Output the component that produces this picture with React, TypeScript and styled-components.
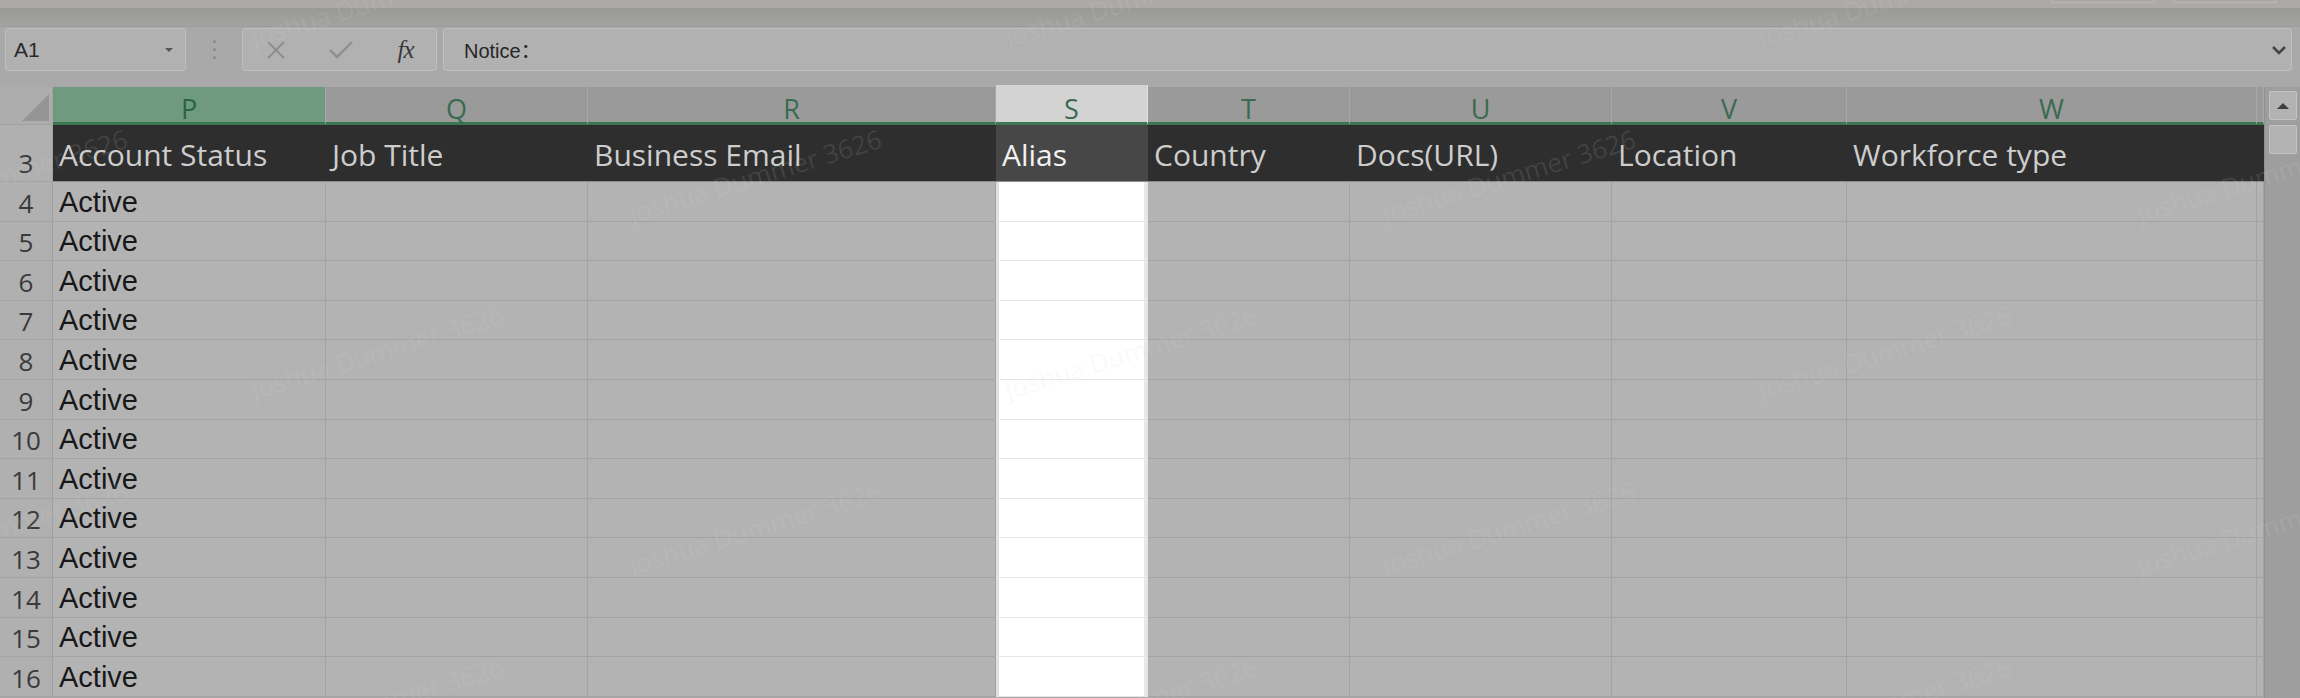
import React from 'react';
import styled, { createGlobalStyle } from 'styled-components';

const GlobalStyle = createGlobalStyle`
  html, body {
    margin: 0;
    padding: 0;
    overflow: hidden;
    background: #a9a9a9;
  }
  body {
    font-family: "Open Sans", "Liberation Sans", sans-serif;
  }
`;

type Column = { key: string; width: number; label: string; spot?: boolean; active?: boolean };

const columns: Column[] = [
    { key: 'P', width: 273, label: 'Account Status', active: true },
    { key: 'Q', width: 262, label: 'Job Title' },
    { key: 'R', width: 408, label: 'Business Email' },
    { key: 'S', width: 152, label: 'Alias', spot: true },
    { key: 'T', width: 202, label: 'Country' },
    { key: 'U', width: 262, label: 'Docs(URL)' },
    { key: 'V', width: 235, label: 'Location' },
    { key: 'W', width: 410, label: 'Workforce type' },
    { key: '', width: 7, label: '' },
];

const bodyRows = [4, 5, 6, 7, 8, 9, 10, 11, 12, 13, 14, 15, 16];

const Page = styled.div`
    position: relative;
    width: 2300px;
    height: 698px;
    display: flex;
    flex-direction: column;
    overflow: hidden;
    background: #a9a9a9;
`;

const TopStrip = styled.div`
    height: 8px;
    background: #abaaa7;
    display: flex;
    justify-content: flex-end;
    gap: 18px;
    padding-right: 23px;
`;

const RibbonButtonEdge = styled.div`
    width: 102px;
    height: 2px;
    border: 1px solid #b8b8b5;
    border-top: none;
    border-radius: 0 0 3px 3px;
`;

const TabBand = styled.div`
    height: 18px;
    background: linear-gradient(#9a9997, #a2a2a0);
    border-bottom: 1px solid #9d9d9b;
`;

const FormulaBar = styled.div`
    height: 60px;
    box-sizing: border-box;
    padding: 1px 8px 0 5px;
    display: flex;
    align-items: flex-start;
`;

const FieldBox = styled.div`
    height: 43px;
    box-sizing: border-box;
    background: #b1b1b1;
    border: 1px solid #bfbfbf;
    border-radius: 3px;
    display: flex;
    align-items: center;
`;

const NameBox = styled(FieldBox)`
    width: 181px;
    justify-content: space-between;
    padding: 0 12px 0 8px;
    font-family: "Liberation Sans", Arial, sans-serif;
    font-size: 21px;
    color: #2a2a2a;
`;

const DropCaret = styled.span`
    width: 0;
    height: 0;
    border-left: 4px solid transparent;
    border-right: 4px solid transparent;
    border-top: 4px solid #555;
`;

const Grip = styled.div`
    width: 56px;
    height: 43px;
    display: flex;
    flex-direction: column;
    align-items: center;
    justify-content: center;
    gap: 5px;
`;

const GripDot = styled.span`
    width: 3px;
    height: 3px;
    border-radius: 50%;
    background: #8b8b8b;
`;

const FxBox = styled(FieldBox)`
    width: 195px;
    display: grid;
    grid-template-columns: repeat(3, 65px);
    justify-items: center;
`;

const FxGlyph = styled.span`
    font-family: "Liberation Serif", "Times New Roman", serif;
    font-style: italic;
    font-size: 25px;
    color: #3a3a3a;
    letter-spacing: -1px;
`;

const FormulaInput = styled(FieldBox)`
    flex: 1;
    margin-left: 6px;
    padding: 0 4px 0 20px;
    justify-content: space-between;
    font-family: "Liberation Sans", "Noto Sans CJK SC", sans-serif;
    font-size: 20px;
    color: #262626;
`;

const SheetArea = styled.div`
    flex: 1;
    display: flex;
`;

const Grid = styled.div`
    display: grid;
    grid-template-columns: 53px ${columns.map((c) => `${c.width}px`).join(' ')};
    grid-template-rows: 38px 57px repeat(13, 39.6px);
    align-content: start;
`;

const CornerCell = styled.div`
    background: #adadad;
    border-right: 1px solid #a3a3a3;
    border-bottom: 1px solid #a0a0a0;
    display: flex;
    justify-content: flex-end;
    align-items: flex-end;
    padding: 0 3px 3px 0;
`;

const CornerTriangle = styled.div`
    width: 27px;
    height: 27px;
    background: #959595;
    clip-path: polygon(100% 0, 100% 100%, 0 100%);
`;

const ColumnHead = styled.div<{ $spot?: boolean; $active?: boolean }>`
    box-sizing: border-box;
    background: ${(p) => (p.$spot ? '#d3d3d3' : p.$active ? '#6f9a80' : '#9a9a9a')};
    border-right: 1px solid ${(p) => (p.$spot ? '#e2e2e2' : '#a8a8a8')};
    border-bottom: 3px solid #3b7751;
    margin-top: ${(p) => (p.$spot ? '-2px' : '0')};
    display: flex;
    justify-content: center;
    align-items: flex-end;
    font-size: 27px;
    line-height: 1;
    color: ${(p) => (p.$active ? '#2a6443' : '#3a6a52')};
`;

const RowNumber = styled.div`
    background: #b0b0b0;
    border-right: 1px solid #a0a0a0;
    border-bottom: 1px solid #a4a4a4;
    display: flex;
    justify-content: center;
    align-items: flex-end;
    padding-bottom: 5px;
    font-size: 26px;
    line-height: 1;
    color: #3a3a3a;
`;

const TitleCell = styled.div<{ $spot?: boolean }>`
    background: ${(p) => (p.$spot ? '#474747' : '#2e2e2e')};
    border-bottom: 1px solid #8c8c8c;
    display: flex;
    align-items: flex-end;
    padding: 0 0 11px 6px;
    font-size: 30px;
    line-height: 1;
    color: ${(p) => (p.$spot ? '#f2f2f2' : '#cdcdcd')};
    white-space: nowrap;
    overflow: hidden;
`;

const DataCell = styled.div<{ $spot?: boolean }>`
    background: ${(p) => (p.$spot ? '#ffffff' : '#b3b3b3')};
    border-right: 1px solid ${(p) => (p.$spot ? '#e4e4e4' : '#a3a3a3')};
    border-bottom: 1px solid ${(p) => (p.$spot ? '#e6e6e6' : '#a3a3a3')};
    box-shadow: ${(p) => (p.$spot ? 'inset 3px 0 0 #e0e0e0, inset -3px 0 0 #e8e8e8' : 'none')};
    display: flex;
    align-items: flex-end;
    padding: 0 0 4px 6px;
    font-family: "Liberation Sans", Arial, sans-serif;
    font-size: 29px;
    line-height: 1;
    color: #181818;
`;

const ScrollBar = styled.div`
    flex: 1;
    background: #9e9e9e;
    border-left: 1px solid #909090;
    display: flex;
    flex-direction: column;
    gap: 5px;
    padding: 4px 3px 0 4px;
`;

const ScrollButton = styled.div`
    height: 29px;
    box-sizing: border-box;
    background: #b3b3b3;
    border: 1px solid #c3c3c3;
    border-radius: 2px;
    display: flex;
    align-items: center;
    justify-content: center;
`;

const UpCaret = styled.span`
    width: 0;
    height: 0;
    border-left: 6px solid transparent;
    border-right: 6px solid transparent;
    border-bottom: 6px solid #3e3e3e;
`;

const WatermarkLayer = styled.div`
    position: absolute;
    inset: 0;
    pointer-events: none;
    overflow: hidden;
`;

const Watermark = styled.span`
    position: absolute;
    transform: translate(-50%, -50%) rotate(-17deg);
    font-size: 26px;
    color: rgba(215, 215, 215, 0.13);
    white-space: nowrap;
`;

const watermarkSpots: { x: number; y: number }[] = [];
[0, 176, 352, 528, 704].forEach((y, i) => {
    const start = i % 2 === 0 ? 377 : 1;
    for (let x = start; x < 2400; x += 754) watermarkSpots.push({ x, y });
});

const CrossIcon = () => (
    <svg width="24" height="18" viewBox="0 0 24 18">
        <path d="M4 1 L20 17 M20 1 L4 17" stroke="#8e8e8e" strokeWidth="2" fill="none" />
    </svg>
);

const CheckIcon = () => (
    <svg width="26" height="20" viewBox="0 0 26 20">
        <path d="M2 10 L9 17 L24 2" stroke="#8e8e8e" strokeWidth="2.4" fill="none" />
    </svg>
);

const ChevronIcon = () => (
    <svg width="16" height="10" viewBox="0 0 16 10">
        <path d="M2 2 L8 8 L14 2" stroke="#444" strokeWidth="2.6" fill="none" />
    </svg>
);

const App = function () {
    return <>
        <GlobalStyle />
        <Page>
            <TopStrip>
                <RibbonButtonEdge />
                <RibbonButtonEdge />
            </TopStrip>
            <TabBand />
            <FormulaBar>
                <NameBox>
                    <span>A1</span>
                    <DropCaret />
                </NameBox>
                <Grip>
                    <GripDot />
                    <GripDot />
                    <GripDot />
                </Grip>
                <FxBox>
                    <CrossIcon />
                    <CheckIcon />
                    <FxGlyph>fx</FxGlyph>
                </FxBox>
                <FormulaInput>
                    <span>Notice：</span>
                    <ChevronIcon />
                </FormulaInput>
            </FormulaBar>
            <SheetArea>
                <Grid>
                    <CornerCell><CornerTriangle /></CornerCell>
                    {columns.map((col) => (
                        <ColumnHead key={`head-${col.key}`} $spot={col.spot} $active={col.active}>{col.key}</ColumnHead>
                    ))}
                    <RowNumber>3</RowNumber>
                    {columns.map((col) => (
                        <TitleCell key={`title-${col.key}`} $spot={col.spot}>{col.label}</TitleCell>
                    ))}
                    {bodyRows.map((row) => (
                        <React.Fragment key={`row-${row}`}>
                            <RowNumber>{row}</RowNumber>
                            {columns.map((col) => (
                                <DataCell key={`${col.key}-${row}`} $spot={col.spot}>
                                    {col.key === 'P' ? 'Active' : ''}
                                </DataCell>
                            ))}
                        </React.Fragment>
                    ))}
                </Grid>
                <ScrollBar>
                    <ScrollButton><UpCaret /></ScrollButton>
                    <ScrollButton />
                </ScrollBar>
            </SheetArea>
            <WatermarkLayer>
                {watermarkSpots.map((spot) => (
                    <Watermark key={`wm-${spot.x}-${spot.y}`} style={{ left: spot.x, top: spot.y }}>
                        Joshua Dummer 3626
                    </Watermark>
                ))}
            </WatermarkLayer>
        </Page>
    </>;
};

export default App;
